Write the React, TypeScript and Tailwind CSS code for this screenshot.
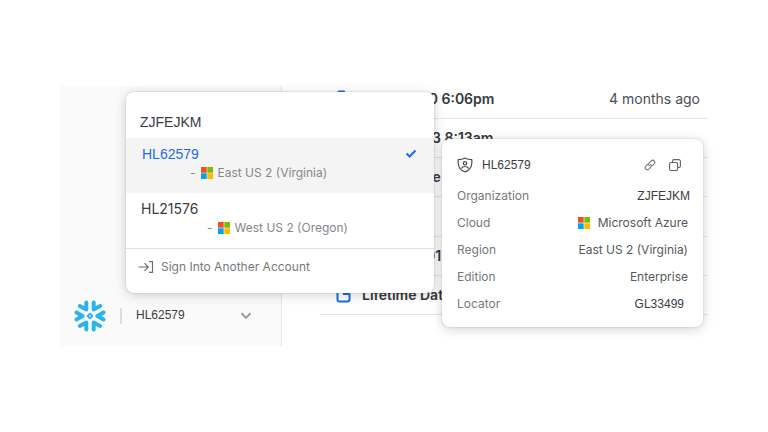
import type { ReactNode } from "react";
import clsx from "clsx";

type Activity = {
  id: string;
  title: string;
  when: string;
  height: string;
};

const activity: Activity[] = [
  { id: "a", title: "2021-01-10 6:06pm", when: "4 months ago", height: "h-8 *:pb-[7px]" },
  { id: "b", title: "2021-01-03 8:13am", when: "", height: "h-[39px]" },
  { id: "c", title: "Usage Note", when: "", height: "h-[39px]" },
  { id: "d", title: "", when: "", height: "h-[40px]" },
  { id: "e", title: "Query 01 01", when: "", height: "h-[39px]" },
  { id: "f", title: "Lifetime Data", when: "", height: "h-[39px]" },
];

function MicrosoftIcon() {
  return (
    <svg className="size-3 shrink-0" viewBox="0 0 12 12" aria-hidden="true">
      <path fill="#f25022" d="M0 0h5.7v5.7H0z" />
      <path fill="#7fba00" d="M6.3 0H12v5.7H6.3z" />
      <path fill="#00a4ef" d="M0 6.3h5.7V12H0z" />
      <path fill="#ffb900" d="M6.3 6.3H12V12H6.3z" />
    </svg>
  );
}

function SnowflakeLogo() {
  return (
    <svg className="size-8 shrink-0" viewBox="0 0 32 32" fill="none" aria-label="Snowflake">
      <g stroke="#29b5e8" strokeWidth="4" strokeLinecap="round" strokeLinejoin="round">
        <path d="M12.300 2.500v7L5.800 6.100" />
        <path d="M19.700 2.500v7l6.500-3.400" />
        <path d="M12.300 29.500v-7l-6.500 3.400" />
        <path d="M19.700 29.500v-7l6.500 3.400" />
        <path d="M2.500 12.500 8.600 16l-6.100 3.500" />
        <path d="M29.500 12.500 23.400 16l6.100 3.500" />
      </g>
      <path
        stroke="#29b5e8"
        strokeWidth="1.800"
        strokeLinejoin="round"
        d="m16 13.600 2.400 2.400-2.400 2.400-2.400-2.400z"
      />
    </svg>
  );
}

function WorksheetIcon() {
  return (
    <svg className="size-4" viewBox="0 0 16 16" fill="none" stroke="#1a6ce7" strokeWidth="2" aria-hidden="true">
      <path d="M9 1.500H4.500a2 2 0 0 0-2 2v9a2 2 0 0 0 2 2h8a2 2 0 0 0 2-2V7" strokeLinecap="round" />
      <path d="M9 2v5h5.500" />
    </svg>
  );
}

function SignInIcon() {
  return (
    <svg className="size-4 shrink-0" viewBox="0 0 16 16" fill="none" stroke="#6a6f76" strokeWidth="1.200" aria-hidden="true">
      <path d="M.5 8h9.500M6.500 4.200 10.200 8l-3.700 3.800M11 2.700h3.500v10.600H11" />
    </svg>
  );
}

function ShieldIcon() {
  return (
    <svg className="size-4 shrink-0" viewBox="0 0 16 16" fill="none" stroke="#4a4f57" strokeWidth="1.200" strokeLinejoin="round" aria-hidden="true">
      <path d="M8 1c2 1.300 4.200 1.700 6.800 1.700.3 2.200.2 4.700-.7 6.900-1 2.500-3.200 4.300-6.100 5.400-2.900-1.100-5.100-2.900-6.100-5.400C1 7.400.9 4.900 1.200 2.700 3.800 2.700 6 2.300 8 1z" />
      <circle cx="8" cy="6.300" r="1.700" />
      <path d="M4.400 11.600c.6-1.400 2-2.100 3.600-2.100s3 .7 3.600 2.100" />
    </svg>
  );
}

function LinkIcon() {
  return (
    <svg className="size-3" viewBox="0 0 12 12" fill="none" stroke="#72767d" strokeWidth="1.100" strokeLinecap="round" aria-hidden="true">
      <g transform="rotate(-45 6 6)">
        <path d="M5 3.900H2.200a2.100 2.100 0 0 0 0 4.200h2.600a2.100 2.100 0 0 0 2.100-2.100" />
        <path d="M7 8.100h2.800a2.100 2.100 0 0 0 0-4.200H7.200A2.100 2.100 0 0 0 5.100 6" />
      </g>
    </svg>
  );
}

function CopyIcon() {
  return (
    <svg className="size-3" viewBox="0 0 12 12" fill="none" stroke="#5f646b" strokeWidth="1.100" aria-hidden="true">
      <rect x=".6" y="3.500" width="8" height="8" rx="1.600" />
      <path d="M3.500 3.400V2.200A1.600 1.600 0 0 1 5.100.6h4.700a1.600 1.600 0 0 1 1.600 1.600v4.700a1.600 1.600 0 0 1-1.600 1.600H8.700" />
    </svg>
  );
}

function AccountOption({
  name,
  region,
  indent,
  selected,
}: {
  name: string;
  region: string;
  indent: string;
  selected?: boolean;
}) {
  return (
    <button
      type="button"
      className={clsx(
        "flex h-[55px] w-full items-start justify-between pr-[18px] text-left",
        selected ? "bg-[#f4f4f4] pl-4" : "bg-white pl-[15px]",
      )}
    >
      <span className="flex flex-col gap-px pt-[7px]">
        <span
          className={clsx(
            "text-[14px] leading-[18px]",
            selected ? "text-[#1a6ce7]" : "font-[Inter,sans-serif] text-[#3a3d42]",
          )}
        >
          {name}
        </span>
        <span className={clsx("flex items-center gap-[5px] font-[Inter,sans-serif] text-[12px] leading-[18px] text-[#85888d]", indent)}>
          <span>-</span>
          <MicrosoftIcon />
          {region}
        </span>
      </span>
      {selected && (
        <svg className="mt-[11px] h-2.5 w-2.5" viewBox="0 0 10 10" fill="none" stroke="#1a6ce7" strokeWidth="2" aria-hidden="true">
          <path d="M.6 4.500 3.600 7.500 9.500 1.500" />
        </svg>
      )}
    </button>
  );
}

function AccountMenu() {
  return (
    <div className="absolute top-1.5 left-[66px] z-10 w-[308px] overflow-hidden rounded-lg bg-white shadow-[0_0_2px_rgba(0,0,0,0.18),0_2px_12px_rgba(0,0,0,0.18)]">
      <h2 className="px-3.5 pt-[21px] pb-[7px] text-[14px] leading-[18px] text-[#3a3d42]">ZJFEJKM</h2>
      <AccountOption name="HL62579" region="East US 2 (Virginia)" indent="pl-12" selected />
      <AccountOption name="HL21576" region="West US 2 (Oregon)" indent="pl-[66px]" />
      <button
        type="button"
        className="flex h-[45px] w-full items-center gap-[7px] border-t border-[#e0e1e3] px-3 pb-[9px] font-[Inter,sans-serif] text-[12px] text-[#75787d]"
      >
        <SignInIcon />
        Sign Into Another Account
      </button>
    </div>
  );
}

function Detail({ label, children }: { label: string; children: ReactNode }) {
  return (
    <div className="flex h-[27px] items-center justify-between">
      <dt className="text-[#75787d]">{label}</dt>
      <dd className="flex items-center text-[#55585d]">{children}</dd>
    </div>
  );
}

function AccountDetails() {
  return (
    <section className="absolute top-[53px] right-[5px] z-20 w-[261px] rounded-lg bg-white px-[15px] pt-3 pb-[10px] font-[Inter,sans-serif] text-[12px] shadow-[0_0_2px_rgba(0,0,0,0.18),0_2px_12px_rgba(0,0,0,0.18)]">
      <header className="mb-[3px] flex h-[28px] items-center gap-[9px]">
        <ShieldIcon />
        <h3 className="flex-1 font-[Liberation_Sans,Arial,sans-serif] text-[12px] text-[#3a3d42]">HL62579</h3>
        <button type="button" aria-label="Copy account URL">
          <LinkIcon />
        </button>
        <button type="button" className="mr-[7px] ml-1" aria-label="Copy account identifier">
          <CopyIcon />
        </button>
      </header>
      <dl>
        <Detail label="Organization">
          <span className="-mr-0.5 font-[Liberation_Sans,Arial,sans-serif] text-[#3a3d42]">ZJFEJKM</span>
        </Detail>
        <Detail label="Cloud">
          <span className="flex items-center gap-2">
            <MicrosoftIcon />
            Microsoft Azure
          </span>
        </Detail>
        <Detail label="Region">East US 2 (Virginia)</Detail>
        <Detail label="Edition">Enterprise</Detail>
        <Detail label="Locator">
          <span className="pr-1 font-[Liberation_Sans,Arial,sans-serif] text-[#3a3d42]">GL33499</span>
        </Detail>
      </dl>
    </section>
  );
}

export default function App() {
  return (
    <div className="min-h-screen bg-white px-[60px] py-[86px] font-[Liberation_Sans,Arial,sans-serif] antialiased">
      <div className="relative flex min-h-[260px]">
        <aside className="flex w-[222px] shrink-0 flex-col justify-end border-r border-[#e4e5e7] bg-[#fafafa]">
          <div className="flex items-center px-3.5 pb-3.5">
            <SnowflakeLogo />
            <span className="ml-[14px] h-4 w-0.5 bg-[#dcdde0]" />
            <button type="button" className="flex flex-1 items-center justify-between pr-[15px] pb-0.5 pl-3.5 text-[12px] text-[#3a3d42]">
              HL62579
              <svg className="size-3" viewBox="0 0 12 12" fill="none" stroke="#9b9ea3" strokeWidth="2" aria-hidden="true">
                <path d="m1.500 4.300 4.500 4.500 4.500-4.500" />
              </svg>
            </button>
          </div>
        </aside>

        <main className="flex-1 pl-[38px]">
          <table className="w-full border-collapse font-[Inter,sans-serif] text-[14px]">
            <tbody>
              {activity.map((item) => (
                <tr key={item.id} className={clsx("border-b border-[#e4e5e7]", item.height)}>
                  <td className="w-[42px] pl-[15px]">{item.title && <WorksheetIcon />}</td>
                  <td className="font-semibold text-[#35383d]">{item.title}</td>
                  <td className="pr-2 text-right text-[#4a4d52]">{item.when}</td>
                </tr>
              ))}
            </tbody>
          </table>
        </main>

        <AccountMenu />
        <AccountDetails />
      </div>
    </div>
  );
}
